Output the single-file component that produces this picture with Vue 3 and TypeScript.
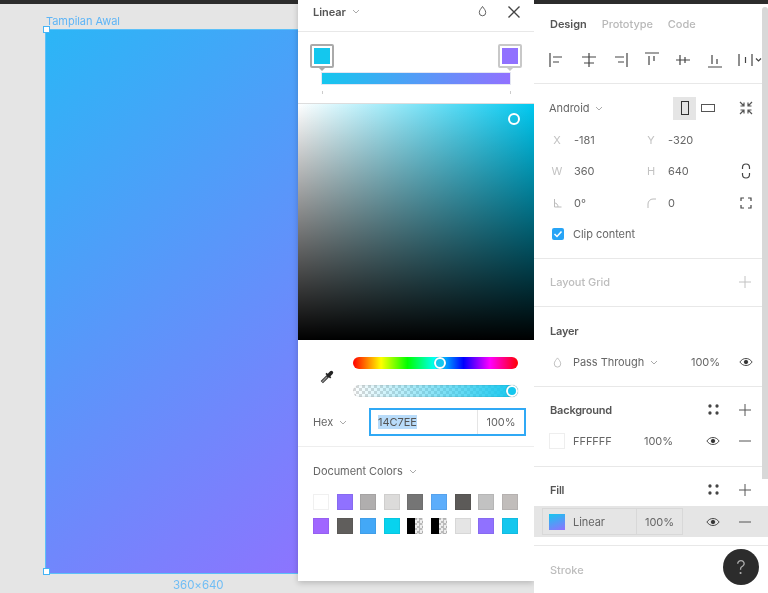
<script setup lang="ts">
const swatches: string[] = [
  '#ffffff', '#9071ff', '#b0aeae', '#dcdbda', '#757575', '#5cadfb', '#5c5a58', '#c2c2c2', '#c1bdbb',
  '#a066ff', '#605e5c', '#43a8f7', '#08d3ee', 'half', 'half', '#e5e5e5', '#9071ff', '#14c7ee',
]
const alignPaths: string[] = [
  'M1 1v14M4 5h9M4 10h6',
  'M1 5h14M3 11h10M8 1v14',
  'M15 1v14M3 5h9M6 10h6',
  'M1 1h14M5 4v9M10 4v5',
  'M1 8h14M5 3v10M10 5v6',
  'M1 15h14M5 3v9M10 7v5',
]
</script>

<template>
  <div class="app">
    <div class="topbar"></div>
    <div class="main">
      <section class="canvas">
        <span class="frame-name">Tampilan Awal</span>
        <div class="frame"></div>
        <i class="handle h-top"></i>
        <i class="handle h-bottom"></i>
        <span class="frame-size">360×640</span>

        <div class="popover">
          <header class="pop-head">
            <span class="pop-title">Linear</span>
            <svg class="chev" viewBox="0 0 8 5"><path d="M1 1l3 3 3-3" /></svg>
            <svg class="drop" viewBox="0 0 12 14"><path d="M6 1.500C4.500 4 2.500 5.500 2.500 8.200a3.500 3.500 0 0 0 7 0C9.500 5.500 7.500 4 6 1.500z" /></svg>
            <svg class="close" viewBox="0 0 14 14"><path d="M1.500 1.500l11 11M12.500 1.500l-11 11" /></svg>
          </header>

          <div class="stops">
            <div class="stop-row">
              <div class="stop stop-a"><i></i></div>
              <div class="stop stop-b"><i></i></div>
            </div>
            <div class="gradient-bar"></div>
            <div class="ticks"><i></i><i></i></div>
          </div>

          <div class="picker">
            <i class="picker-thumb"></i>
          </div>

          <div class="sliders">
            <svg class="dropper" viewBox="0 0 16 16">
              <path class="d-tube" d="M9.500 6.500L3 13" />
              <path class="d-core" d="M8.500 7.500L3.500 12.500" />
              <path class="d-bar" d="M7.500 3.500l5 5" />
              <path class="d-head" d="M13.200 2.800l-2.700 2.700" />
            </svg>
            <div class="slider-col">
              <div class="slider hue"><i></i></div>
              <div class="slider alpha"><i></i></div>
            </div>
          </div>

          <div class="hex-row">
            <span class="hex-label">Hex</span>
            <svg class="chev" viewBox="0 0 8 5"><path d="M1 1l3 3 3-3" /></svg>
            <div class="hex-box">
              <div class="hex-value"><span>14C7EE</span></div>
              <div class="hex-pct">100%</div>
            </div>
          </div>

          <div class="doc">
            <div class="doc-head">
              <span>Document Colors</span>
              <svg class="chev" viewBox="0 0 8 5"><path d="M1 1l3 3 3-3" /></svg>
            </div>
            <div class="swatches">
              <i
                v-for="(c, n) in swatches"
                :key="n"
                class="swatch"
                :class="{ half: c === 'half' }"
                :style="c === 'half' ? undefined : { background: c }"
              ></i>
            </div>
          </div>
        </div>
      </section>

      <aside class="panel">
        <div class="section first">
          <nav class="tabs">
            <span class="tab on">Design</span>
            <span class="tab">Prototype</span>
            <span class="tab">Code</span>
          </nav>
          <div class="aligns">
            <svg v-for="(d, n) in alignPaths" :key="n" class="ic" viewBox="0 0 16 16"><path :d="d" /></svg>
            <svg class="ic dist" viewBox="0 0 24 16"><path d="M1 2v12M14 2v12M7.500 5v6M18 6.500l2.500 2.500 2.500-2.500" /></svg>
          </div>
        </div>

        <div class="section frame-sec">
          <div class="android">
            <span>Android</span>
            <svg class="chev" viewBox="0 0 8 5"><path d="M1 1l3 3 3-3" /></svg>
            <div class="orient">
              <div class="o-on"><i class="portrait"></i></div>
              <i class="landscape"></i>
            </div>
            <svg class="ic shrink" viewBox="0 0 16 16">
              <path d="M2 2l4 4M6 2.500V6H2.500M14 2l-4 4M10 2.500V6h3.500M2 14l4-4M6 13.500V10H2.500M14 14l-4-4M10 13.500V10h3.500" />
            </svg>
          </div>
          <div class="props">
            <span class="lbl">X</span><span class="val">-181</span><span class="lbl">Y</span><span class="val">-320</span><span></span>
          </div>
          <div class="props">
            <span class="lbl">W</span><span class="val">360</span><span class="lbl">H</span><span class="val">640</span>
            <svg class="ic link" viewBox="0 0 16 16"><path d="M4.500 6V4.500a3.500 3.500 0 0 1 7 0V6M4.500 10v1.500a3.500 3.500 0 0 0 7 0V10" /></svg>
          </div>
          <div class="props">
            <svg class="lbl-ic" viewBox="0 0 12 12"><path d="M2.500 2v8h7M2.500 6c2 0 3.500 1.500 3.500 4" /></svg>
            <span class="val">0°</span>
            <svg class="lbl-ic" viewBox="0 0 12 12"><path d="M2 11V7a5 5 0 0 1 5-5h3" /></svg>
            <span class="val">0</span>
            <svg class="ic corners" viewBox="0 0 16 16"><path d="M3 6V3h3M10 3h3v3M13 10v3h-3M6 13H3v-3" /></svg>
          </div>
          <div class="clip">
            <i class="check"><svg viewBox="0 0 12 12"><path d="M2.500 6l2.500 2.500 4.500-5" /></svg></i>
            <span>Clip content</span>
          </div>
        </div>

        <div class="section grid-sec">
          <span class="muted-title">Layout Grid</span>
          <svg class="plus light" viewBox="0 0 12 12"><path d="M6 0v12M0 6h12" /></svg>
        </div>

        <div class="section block layer-sec">
          <div class="head"><b>Layer</b></div>
          <div class="row">
            <svg class="layer-drop" viewBox="0 0 12 14"><path d="M6 2C4.500 4.200 2.500 5.700 2.500 8.500a3.500 3.500 0 0 0 7 0C9.500 5.700 7.500 4.200 6 2z" /></svg>
            <span class="pass">Pass Through</span>
            <svg class="chev" viewBox="0 0 8 5"><path d="M1 1l3 3 3-3" /></svg>
            <span class="pct">100%</span>
            <svg class="eye" viewBox="0 0 16 10"><path d="M1 5c2-2.800 4.300-4 7-4s5 1.200 7 4c-2 2.800-4.300 4-7 4S3 7.800 1 5z" /><circle cx="8" cy="5" r="2" /></svg>
          </div>
        </div>

        <div class="section block bg-sec">
          <div class="head">
            <b>Background</b>
            <div class="head-actions">
              <svg class="dots" viewBox="0 0 10 10"><circle cx="1.800" cy="1.800" r="1.500" /><circle cx="8.200" cy="1.800" r="1.500" /><circle cx="1.800" cy="8.200" r="1.500" /><circle cx="8.200" cy="8.200" r="1.500" /></svg>
              <svg class="plus" viewBox="0 0 12 12"><path d="M6 0v12M0 6h12" /></svg>
            </div>
          </div>
          <div class="row paint">
            <i class="paint-swatch white"></i>
            <span class="paint-name">FFFFFF</span>
            <span class="paint-pct">100%</span>
            <svg class="eye" viewBox="0 0 16 10"><path d="M1 5c2-2.800 4.300-4 7-4s5 1.200 7 4c-2 2.800-4.300 4-7 4S3 7.800 1 5z" /><circle cx="8" cy="5" r="2" /></svg>
            <svg class="minus" viewBox="0 0 12 2"><path d="M0 1h12" /></svg>
          </div>
        </div>

        <div class="section block fill-sec">
          <div class="head">
            <b>Fill</b>
            <div class="head-actions">
              <svg class="dots" viewBox="0 0 10 10"><circle cx="1.800" cy="1.800" r="1.500" /><circle cx="8.200" cy="1.800" r="1.500" /><circle cx="1.800" cy="8.200" r="1.500" /><circle cx="8.200" cy="8.200" r="1.500" /></svg>
              <svg class="plus" viewBox="0 0 12 12"><path d="M6 0v12M0 6h12" /></svg>
            </div>
          </div>
          <div class="row fill-row">
            <div class="fill-box">
              <i class="paint-swatch grad"></i>
              <span class="fill-name">Linear</span>
              <span class="fill-pct">100%</span>
            </div>
            <svg class="eye" viewBox="0 0 16 10"><path d="M1 5c2-2.800 4.300-4 7-4s5 1.200 7 4c-2 2.800-4.300 4-7 4S3 7.800 1 5z" /><circle cx="8" cy="5" r="2" /></svg>
            <svg class="minus" viewBox="0 0 12 2"><path d="M0 1h12" /></svg>
          </div>
        </div>

        <div class="stroke-sec"><span class="muted-title">Stroke</span></div>

        <i class="scrollbar"></i>
        <button class="help">?</button>
      </aside>
    </div>
  </div>
</template>

<style scoped>
.app {
  width: 768px;
  height: 593px;
  overflow: hidden;
  display: flex;
  flex-direction: column;
  font-family: Inter, "Noto Sans", sans-serif;
  font-size: 11px;
  letter-spacing: -0.05px;
  color: #666;
  background: #e5e5e5;
  filter: blur(0.45px);
}
i { display: block; }
svg { display: block; flex: none; fill: none; stroke: #444; stroke-width: 1; }

.topbar { height: 4px; flex: none; background: #2c2c2c; }
.main { flex: 1; display: grid; grid-template-columns: 534px 234px; min-height: 0; }

/* canvas */
.canvas { position: relative; background: #e5e5e5; }
.frame-name { position: absolute; left: 46px; top: 10px; color: #5fb5f6; font-size: 11px; }
.frame {
  position: absolute; left: 45px; top: 24.500px; width: 306px; height: 545px;
  background: linear-gradient(140deg, #2bb6f6, #9270ff);
  box-shadow: inset 0 0 0 1px #5cc0f8;
}
.handle { position: absolute; width: 5px; height: 5px; background: #fff; border: 1.500px solid #45b4f6; left: 42.500px; }
.h-top { top: 22px; }
.h-bottom { top: 564px; }
.frame-size { position: absolute; left: 173px; top: 574px; color: #6fbdf5; font-size: 11.500px; }

/* popover */
.popover {
  position: absolute; left: 298px; top: -4px; width: 236px; height: 581px;
  background: #fff; box-shadow: 0 2px 6px rgba(0, 0, 0, .2);
  display: flex; flex-direction: column;
}
.pop-head {
  height: 23px; flex: none; display: flex; align-items: center;
  padding: 0 13px 8px 15px; border-bottom: 1px solid #e8e8e8;
  box-sizing: content-box;
}
.pop-title { font-weight: 600; color: #555; }
.chev { width: 8px; height: 5px; margin-left: 6px; stroke: #aaa; }
.drop { width: 11px; height: 13px; margin-left: auto; margin-right: 19px; stroke: #555; }
.close { width: 14px; height: 14px; stroke: #444; stroke-width: 1.400; }

.stops { height: 71px; flex: none; padding: 12px 12px 0; box-sizing: border-box; position: relative; }
.stop-row { display: flex; justify-content: space-between; height: 24px; }
.stop { width: 24px; height: 24px; box-sizing: border-box; border: 2px solid #c8c8c8; border-radius: 2px; padding: 2px; background: #fff; position: relative; }
.stop::after { content: ""; position: absolute; left: 7px; bottom: -5px; border: 3px solid transparent; border-bottom: 0; border-top-color: #c8c8c8; }
.stop i { width: 16px; height: 16px; }
.stop-a { border-color: #aaa; }
.stop-a::after { border-top-color: #aaa; }
.stop-a i { background: #14c7ee; }
.stop-b i { background: #9171ff; }
.gradient-bar { height: 11px; margin: 5px 12px 0; background: linear-gradient(90deg, #14c7ee, #9171ff); outline: 1px solid #e4e6f2; }
.ticks { display: flex; justify-content: space-between; margin: 7px 11.500px 0; }
.ticks i { width: 1px; height: 3px; background: #ccc; }

.picker {
  height: 237px; flex: none; position: relative; border-top: 1px solid #ddd; box-sizing: border-box;
  background: linear-gradient(180deg, rgba(0, 0, 0, 0) 0%, #000 100%), linear-gradient(90deg, #fff 0%, #00c8f0 100%);
}
.picker-thumb { position: absolute; left: 210px; top: 9px; width: 8px; height: 8px; border: 2px solid #fff; border-radius: 50%; }

.sliders { display: flex; align-items: center; padding: 17px 16px 0 21px; height: 40px; flex: none; box-sizing: content-box; }
.dropper { width: 15px; height: 15px; }
.d-tube { stroke: #333; stroke-width: 3.400; }
.d-core { stroke: #999; stroke-width: 1.400; }
.d-bar { stroke: #222; stroke-width: 1.800; }
.d-head { stroke: #222; stroke-width: 3.800; stroke-linecap: round; }
.slider-col { margin-left: 19px; flex: 1; display: flex; flex-direction: column; gap: 16px; }
.slider { height: 12px; border-radius: 6px; position: relative; }
.slider i { position: absolute; top: 0; width: 8px; height: 8px; border-radius: 50%; border: 2px solid #fff; box-shadow: 0 0 1px rgba(0,0,0,.4); }
.hue { background: linear-gradient(90deg, #f00 0%, #ff0 17%, #0f0 33%, #0ff 50%, #00f 67%, #f0f 83%, #f00 100%); }
.hue i { left: 81px; background: #14c7ee; }
.alpha {
  background: linear-gradient(90deg, rgba(20, 199, 238, 0), #14c7ee), repeating-conic-gradient(#d8d8d8 0 25%, #fff 0 50%) 0 0 / 6px 6px;
  box-shadow: inset 0 0 0 1px rgba(0,0,0,.05);
}
.alpha i { right: 0; background: #14c7ee; }

.hex-row { display: flex; align-items: center; height: 28px; padding: 11px 8px 0 15px; flex: none; box-sizing: content-box; }
.chev + .hex-box { margin-left: auto; }
.hex-box { width: 157px; height: 28px; box-sizing: border-box; border: 2px solid #30a9f5; display: flex; }
.hex-value { flex: 1; display: flex; align-items: center; padding-left: 7px; border-right: 1px solid #e5e5e5; }
.hex-value span { background: #b9dcfa; color: #555; }
.hex-pct { width: 46px; display: flex; align-items: center; justify-content: center; }

.doc { margin-top: 10px; border-top: 1px solid #eee; padding: 15.500px 15px 0; }
.doc-head { display: flex; align-items: center; height: 17px; }
.swatches { display: grid; grid-template-columns: repeat(9, 16px); column-gap: 7.600px; row-gap: 8px; margin-top: 14px; }
.swatch { width: 16px; height: 16px; box-shadow: inset 0 0 0 1px rgba(0, 0, 0, .06); }
.half { background: linear-gradient(90deg, #000 50%, transparent 50%), repeating-conic-gradient(#bbb 0 25%, #eee 0 50%) 0 0 / 5px 5px; }

/* panel */
.panel { position: relative; background: #fff; overflow: hidden; color: #666; padding-top: 1px; box-sizing: border-box; }
.section { border-bottom: 1px solid #e8e8e8; box-sizing: border-box; }
.first { height: 79px; padding: 0 15px 0 16px; }
.tabs { display: flex; height: 38px; align-items: center; gap: 15px; }
.tab { color: #b8b8b8; font-weight: 500; }
.tab.on { color: #555; font-weight: 600; }
.aligns { display: grid; grid-template-columns: repeat(6, 16px) 24px; column-gap: 15.500px; margin: 9px 0 0 -1px; }
.ic { width: 16px; height: 16px; stroke-width: 1.200; }
.dist { width: 24px; }

.frame-sec { height: 175px; padding: 8.500px 10px 0 15px; }
.android { display: flex; align-items: center; height: 31.500px; margin-right: 4px; }
.orient { margin-left: auto; display: flex; align-items: center; margin-right: 23px; }
.o-on { width: 23px; height: 23px; background: #e5e5e5; display: flex; align-items: center; justify-content: center; margin-right: 5px; }
.portrait { width: 6px; height: 12px; border: 1.200px solid #333; }
.landscape { width: 12px; height: 6px; border: 1.200px solid #555; }
.shrink { stroke: #555; }
.props { display: grid; grid-template-columns: 22px 72px 22px 1fr 24px; align-items: center; height: 31.500px; margin-left: -3px; }
.lbl { color: #c2c2c2; text-align: center; }
.val { padding-left: 6px; }
.lbl-ic { width: 12px; height: 12px; stroke: #bbb; margin-left: 5.500px; }
.link, .corners { stroke: #444; justify-self: center; }
.clip { display: flex; align-items: center; height: 31.500px; gap: 9px; margin-left: 3px; }
.check { width: 12px; height: 12px; background: #27a4f6; border-radius: 2px; }
.check svg { width: 12px; height: 12px; stroke: #fff; stroke-width: 1.500; }

.grid-sec { height: 48px; padding: 0 17px 2px 16px; display: flex; align-items: center; justify-content: space-between; }
.muted-title { color: #bdbdbd; font-weight: 500; }
.plus { width: 12px; height: 12px; stroke: #555; }
.plus.light { stroke: #c2c2c2; }

.block { padding-top: 6px; }
.head { height: 33px; display: flex; align-items: center; justify-content: space-between; padding: 0 17px 0 16px; }
.head b { font-weight: 600; color: #555; letter-spacing: -0.2px; }
.head-actions { display: flex; align-items: center; gap: 20px; }
.dots { width: 11px; height: 11px; fill: #444; stroke: none; }
.row { display: flex; align-items: center; height: 30px; }

.layer-sec { height: 80px; padding-top: 7px; }
.layer-drop { width: 11px; height: 13px; stroke: #bbb; margin-left: 18px; }
.pass { margin-left: 10px; }
.pct { margin-left: auto; margin-right: 19px; }
.eye { width: 14px; height: 10px; margin-right: 15px; stroke: #333; }
.eye circle { fill: #333; }

.bg-sec { height: 80px; }
.paint { padding-left: 15px; }
.paint-swatch { width: 16px; height: 16px; flex: none; }
.white { background: #fff; box-shadow: inset 0 0 0 1px #eee; }
.paint-name { margin-left: 8px; width: 71px; }
.paint-pct { width: 50px; }
.paint .eye, .fill-row .eye { margin-left: auto; margin-right: 19px; }
.minus { width: 12px; height: 2px; margin-right: 17px; stroke: #555; }

.fill-sec { height: 79px; }
.fill-row { height: 31px; background: #e5e5e5; padding-left: 8px; }
.fill-box { width: 141px; height: 27px; box-sizing: border-box; border: 1px solid #d8d8d8; display: flex; align-items: center; padding-left: 6px; }
.grad { background: linear-gradient(160deg, #14c7ee, #9171ff); }
.fill-name { margin-left: 8px; width: 63px; }
.fill-pct { flex: 1; height: 100%; border-left: 1px solid #d8d8d8; display: flex; align-items: center; justify-content: center; }

.stroke-sec { height: 48px; padding-left: 16px; display: flex; align-items: center; }
.scrollbar { position: absolute; right: 0; top: 3px; width: 6px; height: 472px; background: #d8d8d8; border-radius: 3px 3px 0 0; }
.help {
  position: absolute; left: 189px; top: 545px; width: 36px; height: 36px; border: none; padding: 0;
  border-radius: 50%; background: #2c2c2c; color: #aaa; font: 300 19px Inter, sans-serif;
}
</style>
